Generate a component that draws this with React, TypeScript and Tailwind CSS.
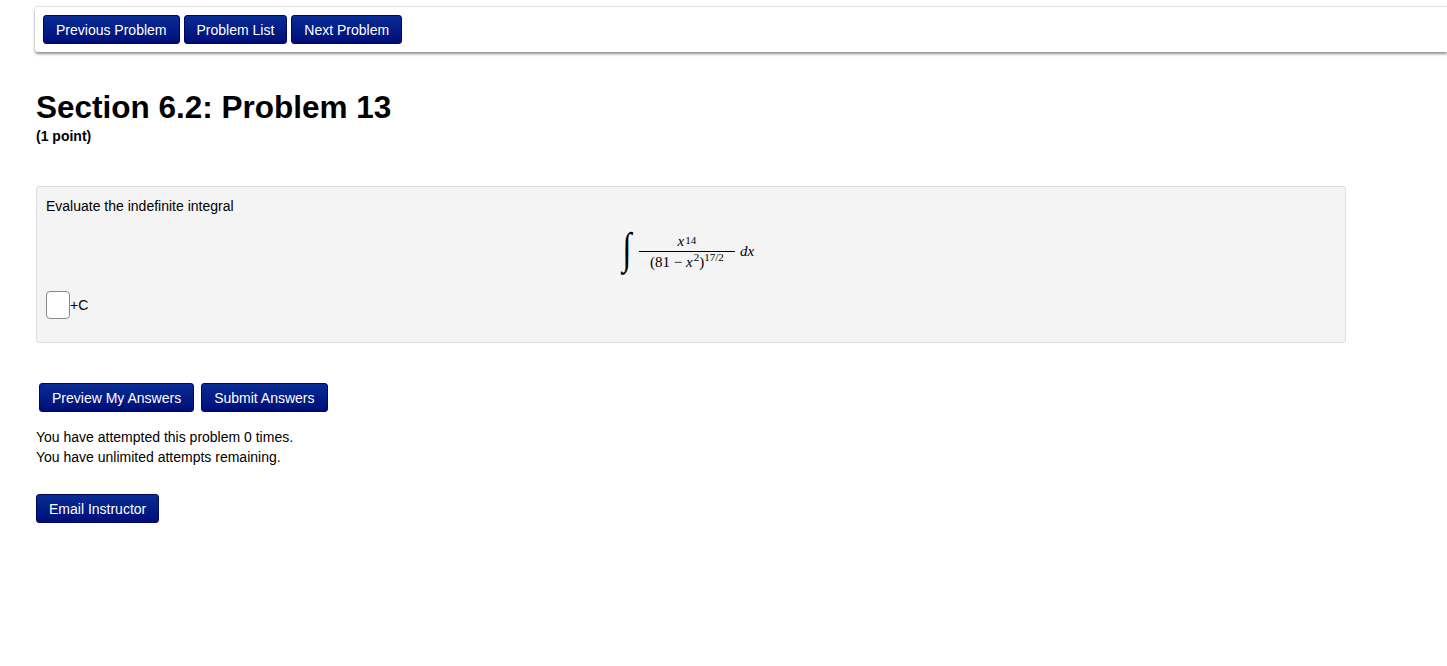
const btn =
  "bg-gradient-to-b from-[#0a2c94] to-[#000c78] text-white text-[14px] leading-none px-[12px] h-[29px] rounded-[3px] border border-[#00085e] flex items-center";

export default function App() {
  return (
    <div className="min-h-[666px] bg-white text-black font-['Liberation_Sans',Arial,sans-serif] pl-[36px] pt-[6px]">
      <div className="flex gap-[4px] border-t border-[#e2e2e2] pl-[8px] py-[8px] rounded-l-[3px] shadow-[0_2px_3px_rgba(0,0,0,0.45)] -ml-[1px]">
        <button className={btn}>Previous Problem</button>
        <button className={btn}>Problem List</button>
        <button className={btn}>Next Problem</button>
      </div>

      <h1 className="mt-[37px] text-[31.5px] font-bold leading-[36px]">Section 6.2: Problem 13</h1>
      <div className="text-[14px] font-bold leading-[16px] mt-[3px]">(1 point)</div>

      <div className="mt-[42px] w-[1310px] bg-[#f4f4f4] border border-[#dedede] rounded-[3px] px-[9px] pt-[11px] pb-[23px] text-[14px]">
        <p className="leading-[17px]">Evaluate the indefinite integral</p>
        <div className="flex justify-center items-center mt-[16px] h-[42px] font-['Liberation_Serif','DejaVu_Serif',serif] pr-[7px]">
          <span className="text-[44px] italic leading-none -mt-[6px] mr-[6px] scale-x-[0.75]">∫</span>
          <span className="inline-flex flex-col items-center">
            <span className="text-[15px] leading-[15px] pb-[2px]">
              <i>x</i>
              <sup className="text-[11px] relative -top-[2px] ml-[1px]">14</sup>
            </span>
            <span className="h-[1px] w-[96px] bg-black" />
            <span className="text-[15px] leading-[18px] pt-[1px]">
              (81 − <i>x</i>
              <sup className="text-[11px] ml-[1px]">2</sup>)<sup className="text-[11px]">17/2</sup>
            </span>
          </span>
          <span className="text-[15px] italic ml-[5px] -mt-[2px]">dx</span>
        </div>
        <div className="flex items-center mt-[18px]">
          <span className="w-[24px] h-[28px] bg-white border border-[#8a8a8a] rounded-[4px] inline-block" />
          <span>+C</span>
        </div>
      </div>

      <div className="flex gap-[7px] mt-[40px] ml-[3px]">
        <button className={btn}>Preview My Answers</button>
        <button className={btn}>Submit Answers</button>
      </div>

      <div className="mt-[15px] text-[14px] leading-[20px]">
        <p>You have attempted this problem 0 times.</p>
        <p>You have unlimited attempts remaining.</p>
      </div>

      <div className="mt-[27px]">
        <button className={btn}>Email Instructor</button>
      </div>
    </div>
  );
}
